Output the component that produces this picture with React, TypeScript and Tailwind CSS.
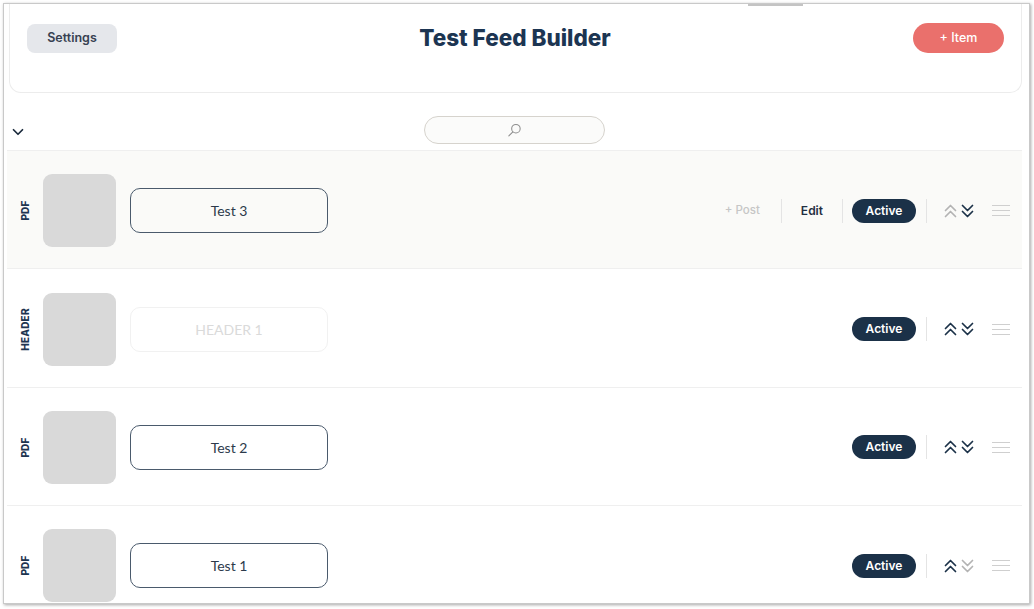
import React from 'react';
import { ChevronDown } from 'lucide-react';

interface FeedItem {
  id: number;
  kind: string;
  title: string;
  isHeader?: boolean;
  canPost?: boolean;
  highlighted?: boolean;
  canUp: boolean;
  canDown: boolean;
}

const items: FeedItem[] = [
  { id: 3, kind: 'PDF', title: 'Test 3', canPost: true, highlighted: true, canUp: false, canDown: true },
  { id: 0, kind: 'HEADER', title: 'HEADER 1', isHeader: true, canUp: true, canDown: true },
  { id: 2, kind: 'PDF', title: 'Test 2', canUp: true, canDown: true },
  { id: 1, kind: 'PDF', title: 'Test 1', canUp: true, canDown: false },
];

const SearchGlyph = () => (
  <svg width="17" height="17" viewBox="0 0 24 24" fill="none" stroke="#8d8d8d" strokeWidth="1.5" strokeLinecap="round">
    <circle cx="14" cy="9.5" r="6" />
    <line x1="9.7" y1="13.8" x2="4" y2="19.5" />
  </svg>
);

// double chevron, drawn to match the thin arrows in the rows
const DoubleChevron: React.FC<{ dir: 'up' | 'down'; active: boolean }> = ({ dir, active }) => (
  <svg
    width="13"
    height="14"
    viewBox="0 0 13 14"
    fill="none"
    stroke={active ? '#1b3148' : '#b3b3b3'}
    strokeWidth="1.7"
    strokeLinecap="round"
    strokeLinejoin="round"
    className={dir === 'down' ? 'rotate-180' : ''}
  >
    <polyline points="1.5,6.5 6.5,1.5 11.5,6.5" />
    <polyline points="1.5,12.5 6.5,7.5 11.5,12.5" />
  </svg>
);

const Handle = () => (
  <div className="flex flex-col gap-[4px] w-[18px]">
    <span className="h-px bg-[#cfcfcf]" />
    <span className="h-px bg-[#cfcfcf]" />
    <span className="h-px bg-[#cfcfcf]" />
  </div>
);

const Divider = () => <span className="block w-px h-[24px] bg-[#e4e4e4]" />;

const FeedRow: React.FC<{ item: FeedItem }> = ({ item }) => (
  <div
    className={`flex items-center h-[118.4px] pt-[2px] border-t border-[#efefef] ${item.highlighted ? 'bg-[#fafaf8]' : 'bg-white'}`}
  >
    <div className="w-[36px] flex justify-center">
      <span className="-rotate-90 text-[10px] font-extrabold tracking-[0.2px] text-[#1d3450] font-['Inter',sans-serif] whitespace-nowrap">
        {item.kind}
      </span>
    </div>
    <div className="w-[73px] h-[73px] rounded-[9px] bg-[#d9d9d9] shrink-0" />
    <div
      className={`ml-[14px] w-[198px] h-[45px] rounded-[10px] border flex items-center justify-center font-['Lato',sans-serif] text-[14px] ${
        item.isHeader ? 'border-[#f1f1f1] text-[#dadada]' : 'border-[#4a5a6c] text-[#2c3a4b]'
      }`}
    >
      {item.title}
    </div>

    <div className="ml-auto flex items-center font-['Inter',sans-serif] pr-[12px]">
      {item.canPost && (
        <>
          <span className="text-[11.5px] font-medium text-[#c6c6c6] mr-[21px]">+ Post</span>
          <Divider />
          <span className="text-[12px] font-semibold text-[#1f2f42] mx-[19px]">Edit</span>
          <Divider />
        </>
      )}
      <span className="ml-[9px] w-[64px] h-[24px] rounded-full bg-[#1b3148] text-white text-[12px] font-semibold flex items-center justify-center">
        Active
      </span>
      <div className="ml-[10px]">
        <Divider />
      </div>
      <div className="ml-[17px] flex items-center gap-[4px]">
        <DoubleChevron dir="up" active={item.canUp} />
        <DoubleChevron dir="down" active={item.canDown} />
      </div>
      <div className="ml-[18px]">
        <Handle />
      </div>
    </div>
  </div>
);

export default function App() {
  return (
    <div className="w-[1034px] h-[609px] bg-white pt-[3px] pl-[3px] pr-[4px] pb-[5px] overflow-hidden">
      <div className="relative w-full h-full border border-[#c9c9c9] shadow-[1px_1px_3px_rgba(0,0,0,0.35)] overflow-hidden bg-white">
        <span className="absolute top-0 left-[744px] w-[55px] h-[2px] bg-[#c4c4c4]" />

        {/* Header */}
        <div className="ml-[5px] mr-[7px] h-[89px] border border-t-0 border-[#ececec] rounded-b-[12px] px-[17px] pt-[19px]">
          <div className="flex items-center justify-between h-[30px]">
            <button className="w-[90px] h-[29px] rounded-[8px] bg-[#e5e7eb] text-[12.5px] font-semibold text-[#374151] font-['Inter',sans-serif]">
              Settings
            </button>
            <h1 className="text-[22.5px] font-extrabold text-[#1c3552] font-['Inter',sans-serif] leading-none">
              Test Feed Builder
            </h1>
            <button className="w-[91px] h-[30px] rounded-full bg-[#ea706c] text-white text-[12.5px] font-medium font-['Inter',sans-serif]">
              + Item
            </button>
          </div>
        </div>

        {/* Toolbar */}
        <div className="ml-[3px] mr-[7px] grid grid-cols-[1fr_auto_1fr] items-center pt-[23px] pb-[6px]">
          <div className="pl-[2px] pt-[4px]">
            <ChevronDown size={18} strokeWidth={2.3} color="#1b2b3d" />
          </div>
          <div className="w-[181px] h-[28px] rounded-full border border-[#d6d3cd] bg-[#fbfbfa] flex items-center justify-center">
            <SearchGlyph />
          </div>
          <div />
        </div>

        {/* Rows */}
        <div className="ml-[3px] mr-[7px]">
          {items.map((item) => (
            <FeedRow key={item.title} item={item} />
          ))}
        </div>
      </div>
    </div>
  );
}
